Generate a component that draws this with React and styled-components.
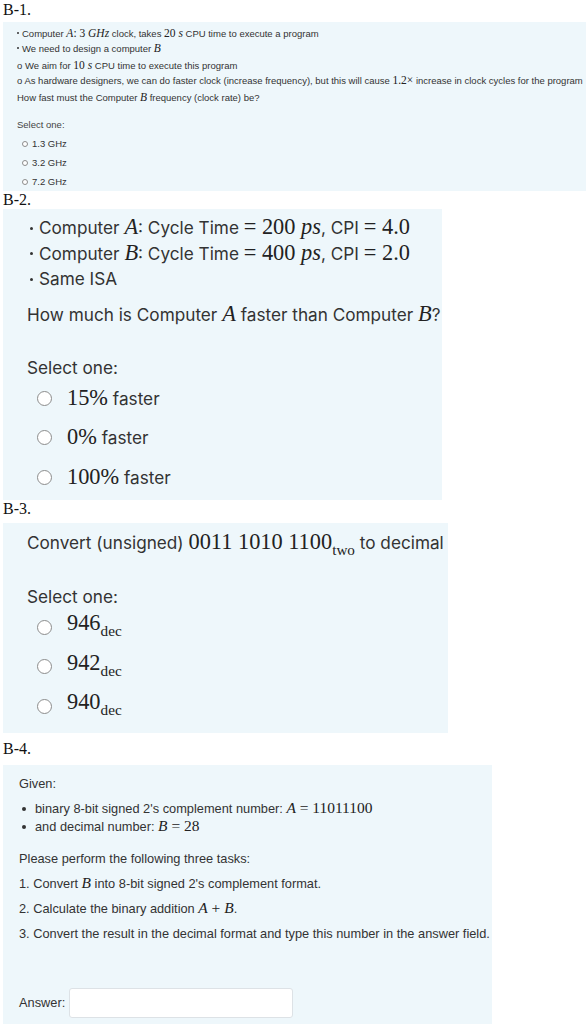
import React from "react";
import styled, { createGlobalStyle } from "styled-components";

const GlobalStyle = createGlobalStyle`
  body {
    margin: 0;
    background: #fff;
  }
`;

const Page = styled.div`
  padding-left: 3px;
`;

const Label = styled.div`
  font-family: "Liberation Serif", serif;
  font-size: 16px;
  line-height: 18px;
  color: #111;
  margin: ${(p) => p.$top}px 0 ${(p) => p.$bottom}px;
`;

const Card = styled.div`
  box-sizing: border-box;
  width: ${(p) => p.$width}px;
  padding: ${(p) => p.$pad};
  background: #eef7fb;
  color: #333;
  font-family: ${(p) => p.$font || '"Liberation Sans", sans-serif'};
  font-size: ${(p) => p.$size}px;
  line-height: ${(p) => p.$lh}px;
  white-space: nowrap;
  overflow: hidden;
`;

const Line = styled.div`
  margin-top: ${(p) => p.$mt || 0}px;
  padding-left: ${(p) => p.$indent || 0}px;
  line-height: ${(p) => (p.$lh ? `${p.$lh}px` : "inherit")};
  color: ${(p) => p.$color || "inherit"};
`;

const Dot = styled.span`
  display: inline-block;
  width: ${(p) => p.$size}px;
  height: ${(p) => p.$size}px;
  border-radius: 50%;
  background: currentColor;
  vertical-align: middle;
  margin-right: ${(p) => p.$gap}px;
  position: relative;
  top: -1px;
`;

const M = styled.span`
  font-family: "Liberation Serif", "DejaVu Serif", serif;
  font-size: ${(p) => p.$scale || 1.21}em;
  line-height: 0;
  color: #222;
`;

const V = styled.i`
  font-style: italic;
`;

const Sub = styled.sub`
  font-size: 0.68em;
  line-height: 0;
  vertical-align: -0.4em;
`;

const Option = styled.label`
  display: flex;
  align-items: center;
  height: ${(p) => p.$h}px;
  padding-left: ${(p) => p.$indent}px;
  gap: ${(p) => p.$gap}px;
`;

const Radio = styled.span`
  box-sizing: border-box;
  flex: none;
  width: ${(p) => p.$size}px;
  height: ${(p) => p.$size}px;
  border-radius: 50%;
  border: 1px solid #8c8c8c;
  background: #fff;
`;

const AnswerRow = styled.div`
  display: flex;
  align-items: center;
  gap: 4px;
  margin-top: 46px;
  padding-bottom: 10px;
`;

const AnswerInput = styled.input`
  box-sizing: border-box;
  width: 224px;
  height: 30px;
  border: 1px solid #dde2e6;
  border-radius: 3px;
  background: #fff;
`;

const Q1 = () => (
  <>
    <Label $top={1} $bottom={3}>B-1.</Label>
    <Card $width={583} $pad="4px 0 0 14px" $size={9.5} $lh={15}>
      <Line>
        <Dot $size={2} $gap={3} />
        Computer <M><V>A</V>: 3 <V>GHz</V></M> clock, takes <M>20 <V>s</V></M> CPU time to execute a program
      </Line>
      <Line>
        <Dot $size={2} $gap={3} />
        We need to design a computer <M><V>B</V></M>
      </Line>
      <Line $mt={2}>
        o We aim for <M>10 <V>s</V></M> CPU time to execute this program
      </Line>
      <Line>
        o As hardware designers, we can do faster clock (increase frequency), but this will cause <M>1.2×</M> increase in clock cycles for the program
      </Line>
      <Line $mt={2}>
        How fast must the Computer <M><V>B</V></M> frequency (clock rate) be?
      </Line>
      <Line $mt={12} $color="#444">Select one:</Line>
      <Line $mt={2}>
        {["1.3 GHz", "3.2 GHz", "7.2 GHz"].map((t) => (
          <Option key={t} $h={19} $indent={5} $gap={4}>
            <Radio $size={6} />
            {t}
          </Option>
        ))}
      </Line>
    </Card>
  </>
);

const Q2 = () => (
  <>
    <Label $top={0} $bottom={0}>B-2.</Label>
    <Card $width={439} $pad="6px 0 3px 24px" $font='Inter, "Liberation Sans", sans-serif' $size={17.2} $lh={25.5}>
      <Line $indent={3}>
        <Dot $size={3} $gap={6} />
        Computer <M $scale={1.3}><V>A</V></M>: Cycle Time <M $scale={1.3}>= 200 <V>ps</V></M>, CPI <M $scale={1.3}>= 4.0</M>
      </Line>
      <Line $indent={3}>
        <Dot $size={3} $gap={6} />
        Computer <M $scale={1.3}><V>B</V></M>: Cycle Time <M $scale={1.3}>= 400 <V>ps</V></M>, CPI <M $scale={1.3}>= 2.0</M>
      </Line>
      <Line $indent={3}>
        <Dot $size={3} $gap={6} />
        Same ISA
      </Line>
      <Line $mt={10}>
        How much is Computer <M $scale={1.3}><V>A</V></M> faster than Computer <M $scale={1.3}><V>B</V></M>?
      </Line>
      <Line $mt={28.5} $lh={23}>Select one:</Line>
      {[["15%", " faster"], ["0%", " faster"], ["100%", " faster"]].map(([n, t]) => (
        <Option key={n} $h={39.5} $indent={10} $gap={15}>
          <Radio $size={15} />
          <span><M $scale={1.3}>{n}</M>{t}</span>
        </Option>
      ))}
    </Card>
  </>
);

const Q3 = () => (
  <>
    <Label $top={0} $bottom={5}>B-3.</Label>
    <Card $width={445} $pad="7px 0 7px 24px" $font='Inter, "Liberation Sans", sans-serif' $size={17.2} $lh={25.5}>
      <Line>
        Convert (unsigned) <M $scale={1.3}>0011 1010 1100<Sub>two</Sub></M> to decimal
      </Line>
      <Line $mt={29} $lh={23}>Select one:</Line>
      {["946", "942", "940"].map((n) => (
        <Option key={n} $h={39.5} $indent={10} $gap={15}>
          <Radio $size={15} />
          <M $scale={1.3}>{n}<Sub>dec</Sub></M>
        </Option>
      ))}
    </Card>
  </>
);

const Q4 = () => (
  <>
    <Label $top={6.5} $bottom={7.5}>B-4.</Label>
    <Card $width={489} $pad="11px 0 0 16px" $size={12.8} $lh={16}>
      <Line>Given:</Line>
      <Line $mt={8} $lh={18} $indent={3}>
        <Dot $size={4} $gap={9} />
        binary 8-bit signed 2's complement number: <M><V>A</V> = 11011100</M>
      </Line>
      <Line $lh={18} $indent={3}>
        <Dot $size={4} $gap={9} />
        and decimal number: <M><V>B</V> = 28</M>
      </Line>
      <Line $mt={15}>Please perform the following three tasks:</Line>
      <Line $mt={9}>
        1. Convert <M><V>B</V></M> into 8-bit signed 2's complement format.
      </Line>
      <Line $mt={9}>
        2. Calculate the binary addition <M><V>A</V> + <V>B</V></M>.
      </Line>
      <Line $mt={9}>
        3. Convert the result in the decimal format and type this number in the answer field.
      </Line>
      <AnswerRow>
        Answer:
        <AnswerInput type="text" />
      </AnswerRow>
    </Card>
  </>
);

export default function App() {
  return (
    <>
      <GlobalStyle />
      <Page>
        <Q1 />
        <Q2 />
        <Q3 />
        <Q4 />
      </Page>
    </>
  );
}
